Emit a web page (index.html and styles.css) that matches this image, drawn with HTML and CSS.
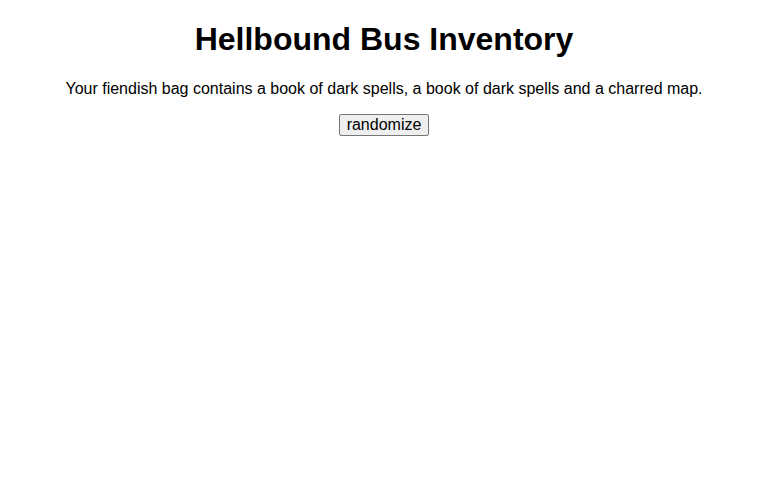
FILE: index.html
```html
<!DOCTYPE html>
<html lang="en">
<head>
  <meta charset="UTF-8" />
  <meta name="viewport" content="width=device-width, initial-scale=1.0" />
  <title>Hellbound Bus Inventory</title>
  <link rel="stylesheet" href="styles.css">
</head>
<body>
  <h1 class="title">Hellbound Bus Inventory</h1>
  <p id="inventory" class="inventory">Your fiendish bag contains a book of dark spells, a book of dark spells and a charred map.</p>
  <button id="randomize" class="randomize">randomize</button>

  <script>
    const items = [
      "a book of dark spells",
      "a charred map",
      "a cursed bus ticket",
      "a brimstone lantern",
      "a bone whistle"
    ];
    const inventory = document.getElementById("inventory");

    function pick() {
      return items[Math.floor(Math.random() * items.length)];
    }

    document.getElementById("randomize").addEventListener("click", () => {
      inventory.textContent = "Your fiendish bag contains " + pick() + ", " + pick() + " and " + pick() + ".";
    });
  </script>
</body>
</html>
```

FILE: styles.css
```css
body {
  margin: 8px;
  background: white;
  color: black;
  font-family: "Liberation Sans", Arial, sans-serif;
  text-align: center;
}
.title {
  font-size: 32px;
  font-weight: bold;
  margin: 13px 0 22px;
}
.inventory {
  font-size: 16px;
  margin: 16px 0 16px;
}
.randomize {
  font-family: "Liberation Sans", Arial, sans-serif;
  font-size: 16px;
  color: black;
  background: #efefef;
  border: 1px solid #767676;
  border-radius: 2px;
  padding: 1px 7px;
}
```
